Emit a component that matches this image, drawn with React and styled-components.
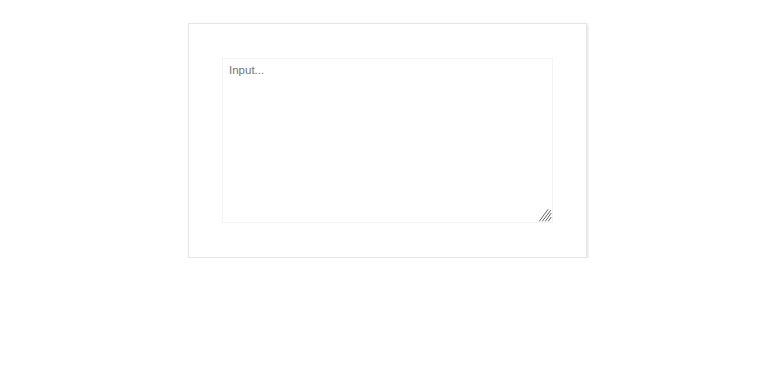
import React from 'react';
import styled, { createGlobalStyle } from 'styled-components';

const GlobalStyle = createGlobalStyle`
  body {
    margin: 0;
    background: #ffffff;
    font-family: "Liberation Sans", Arial, sans-serif;
  }
`;

const Page = styled.div`
  display: flex;
  justify-content: center;
  padding-top: 23px;
`;

const Card = styled.div`
  box-sizing: border-box;
  width: 399px;
  height: 235px;
  padding: 34px 33px 0 33px;
  background: #ffffff;
  border: 1px solid #e6e6e6;
  box-shadow: 1px 1px 2px rgba(0, 0, 0, 0.12);
  margin-left: 5px;
`;

const FieldWrap = styled.div`
  position: relative;
  width: 331px;
  height: 165px;
`;

const Field = styled.textarea`
  box-sizing: border-box;
  display: block;
  width: 100%;
  height: 100%;
  margin: 0;
  padding: 5px 6px;
  border: 1px solid #f3f3f3;
  outline: 0;
  resize: none;
  font-family: "Liberation Sans", Arial, sans-serif;
  font-size: 11.5px;
  color: #333;

  ::placeholder {
    color: #737373;
  }
`;

const Grip = styled.svg`
  position: absolute;
  right: 1px;
  bottom: 1px;
  pointer-events: none;
`;

function ResizeGrip() {
  return (
    <Grip width="14" height="14" viewBox="0 0 14 14">
      <g stroke="#666" strokeWidth="1" strokeLinecap="square">
        <line x1="1.5" y1="13" x2="10" y2="1.5" />
        <line x1="4.5" y1="13" x2="12.5" y2="2.5" />
        <line x1="7.5" y1="13" x2="13" y2="5.5" />
        <line x1="10.5" y1="13" x2="13" y2="9.5" />
      </g>
    </Grip>
  );
}

export default function App() {
  return (
    <>
      <GlobalStyle />
      <Page>
        <Card>
          <FieldWrap>
            <Field placeholder="Input..." />
            <ResizeGrip />
          </FieldWrap>
        </Card>
      </Page>
    </>
  );
}
